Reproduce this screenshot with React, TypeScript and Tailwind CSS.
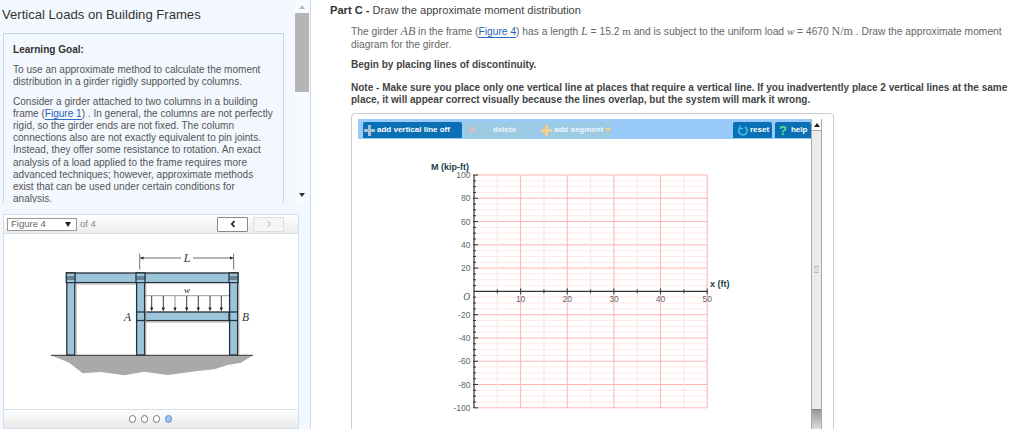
import React from "react";

const serif = { fontFamily: '"Liberation Serif", serif' };

function Chart() {
  const X0 = 474, PX = 4.664, Y0 = 291.4, PY = 1.164;
  const minor: React.ReactNode[] = [];
  for (let v = -100; v <= 100; v += 5) {
    const y = Y0 - v * PY;
    if (v === 0) continue;
    const major = v % 20 === 0;
    minor.push(<line key={"h" + v} x1={X0} x2={X0 + 50 * PX} y1={y} y2={y} stroke={major ? "#ffb3b3" : "#ffe8e8"} strokeWidth={1} />);
  }
  for (let v = 5; v <= 50; v += 5) {
    const x = X0 + v * PX;
    const major = v % 10 === 0;
    minor.push(<line key={"v" + v} x1={x} x2={x} y1={Y0 - 100 * PY} y2={Y0 + 100 * PY} stroke={major ? "#ffb3b3" : "#ffe0e0"} strokeWidth={1} />);
  }
  for (let v = -100; v <= 100; v += 5) {
    const y = Y0 - v * PY;
    if (v === 0) continue;
    const major = v % 20 === 0;
    minor.push(<line key={"t" + v} x1={473} x2={major ? 478 : 476} y1={y} y2={y} stroke="#333" strokeWidth={1} />);
  }
  for (let v = 5; v <= 50; v += 5) {
    const x = X0 + v * PX;
    const major = v % 10 === 0;
    minor.push(<line key={"vt" + v} x1={x} x2={x} y1={Y0 - (major ? 3 : 2)} y2={Y0 + (major ? 3 : 2)} stroke="#333" strokeWidth={1} />);
  }
  const ts = { fontFamily: '"Liberation Sans", sans-serif', fontSize: 8.5, fill: "#666" };
  return (
    <svg viewBox="358 139 453 290" width={453} height={290} className="block">
      {minor}
      <line x1={X0} x2={X0} y1={Y0 - 100 * PY} y2={Y0 + 100 * PY} stroke="#333" strokeWidth={1.2} />
      <line x1={X0} x2={X0 + 50 * PX} y1={Y0} y2={Y0} stroke="#333" strokeWidth={1.2} />
      {[100, 80, 60, 40, 20, -20, -40, -60, -80, -100].map((v) => (
        <text key={v} x={470.5} y={Y0 - v * PY + 3} textAnchor="end" style={ts}>{v}</text>
      ))}
      <text x={470} y={300} textAnchor="end" style={{ ...serif, fontSize: 9.5, fontStyle: "italic", fill: "#555" }}>O</text>
      {[10, 20, 30, 40, 50].map((v) => (
        <text key={v} x={X0 + v * PX} y={302} textAnchor="middle" style={ts}>{v}</text>
      ))}
      <text x={431} y={170} style={{ fontFamily: '"Liberation Sans", sans-serif', fontSize: 9, fontWeight: 700, fill: "#1d3d4a" }}>M (kip-ft)</text>
      <text x={710} y={287} style={{ fontFamily: '"Liberation Sans", sans-serif', fontSize: 9, fontWeight: 700, fill: "#1d3d4a" }}>x (ft)</text>
    </svg>
  );
}

function Frame() {
  const dark = "#263238";
  const col = (x: number) => (
    <g key={x}>
      <rect x={x} y={272} width={8} height={82} fill="#9cc5dc" stroke={dark} strokeWidth={1.3} />
      <line x1={x + 9.2} x2={x + 9.2} y1={282} y2={354} stroke="#999" strokeWidth={0.9} />
    </g>
  );
  return (
    <svg viewBox="3 233 296 175" width={296} height={175} className="block">
      <polygon points="50,354.3 252,354.3 240,361.7 226.7,364 213,368.3 196.7,370 166.7,374 143.3,370.7 123.3,374.3 100,371 81.7,372.3 68.3,361.7" fill="#a9a9a9" />
      <line x1={50} x2={252} y1={354.3} y2={354.3} stroke="#333" strokeWidth={1} />
      <rect x={65.5} y={272} width={171.5} height={9.6} fill="#9cc5dc" stroke={dark} strokeWidth={1.3} />
      <rect x={144} y={311} width={84} height={8.6} fill="#9cc5dc" stroke={dark} strokeWidth={1.3} />
      <line x1={74} x2={135} y1={283} y2={283} stroke="#999" strokeWidth={0.8} />
      <line x1={144} x2={228} y1={321} y2={321} stroke="#999" strokeWidth={0.8} />
      {[65.8, 135.6, 228.6].map(col)}
      {[[65.3, 74], [135, 144], [228, 237]].map(([a, b]) => (
        <g key={a}>
          <rect x={a} y={272} width={b - a} height={9.6} fill="#9cc5dc" stroke={dark} strokeWidth={1.2} />
          <line x1={a} x2={b} y1={276} y2={276} stroke={dark} strokeWidth={0.9} />
          <line x1={a} x2={b} y1={278} y2={278} stroke={dark} strokeWidth={0.9} />
        </g>
      ))}
      {[[135, 144], [228, 237]].map(([a, b]) => (
        <g key={a}>
          <line x1={a} x2={b} y1={311} y2={311} stroke={dark} strokeWidth={1.3} />
          <line x1={a} x2={b} y1={319.5} y2={319.5} stroke={dark} strokeWidth={1.3} />
        </g>
      ))}
      <line x1={144} x2={228} y1={294.7} y2={294.7} stroke="#999" strokeWidth={1} />
      {[150.7, 162.3, 174, 185.7, 197.3, 209, 220.3].map((x, i) => (
        <g key={x}>
          <line x1={x} x2={x} y1={295} y2={308} stroke={i === 2 ? "#888" : "#222"} strokeWidth={0.9} />
          <polygon points={`${x - 1.6},306.6 ${x + 1.6},306.6 ${x},310.4`} fill="#222" />
        </g>
      ))}
      <line x1={138.7} x2={138.7} y1={252.7} y2={268.7} stroke="#666" strokeWidth={0.9} />
      <line x1={232.7} x2={232.7} y1={252.7} y2={268.7} stroke="#666" strokeWidth={0.9} />
      <line x1={139} x2={180} y1={257} y2={257} stroke="#444" strokeWidth={0.8} />
      <line x1={192} x2={232} y1={257} y2={257} stroke="#444" strokeWidth={0.8} />
      <polygon points="139,257 142.5,255.5 142.5,258.5" fill="#222" />
      <polygon points="232.5,257 229,255.5 229,258.5" fill="#222" />
      <g style={{ ...serif, fontStyle: "italic", fill: "#333" }}>
        <text x={186} y={261} textAnchor="middle" fontSize={12}>L</text>
        <text x={186} y={292} textAnchor="middle" fontSize={9}>w</text>
        <text x={126.5} y={320} textAnchor="middle" fontSize={11.5}>A</text>
        <text x={244.5} y={320} textAnchor="middle" fontSize={11.5}>B</text>
      </g>
    </svg>
  );
}

function Plus({ color }: { color: string }) {
  return (
    <svg width={11} height={11} viewBox="0 0 11 11" className="shrink-0">
      <path d="M4 0h3v4h4v3H7v4H4V7H0V4h4z" fill={color} />
    </svg>
  );
}

export default function App() {
  return (
    <div className="flex h-[429px] w-[1024px] overflow-hidden bg-white text-[#555] font-['Liberation_Sans',Arial,sans-serif]">
      {/* Left panel */}
      <div className="flex h-full w-[311px] shrink-0 flex-col border-r border-[#c9dbee] bg-[#f3f8ff]">
        <div className="flex h-[203px] shrink-0">
          <div className="w-[295px] shrink-0 overflow-hidden">
            <h1 className="pl-[2px] pt-[7px] text-[13.1px] leading-[15px] text-[#333]">Vertical Loads on Building Frames</h1>
            <div className="ml-[3px] mt-[11px] h-[200px] w-[281px] border border-[#c3d6ea] pl-[9px] pr-[9px] pt-[10px] text-[10.05px] leading-[12.2px] text-[#555]">
              <p className="font-bold text-[#333]">Learning Goal:</p>
              <p className="mt-[8px]">To use an approximate method to calculate the moment distribution in a girder rigidly supported by columns.</p>
              <p className="mt-[7px]">
                Consider a girder attached to two columns in a building frame (<span className="border-b border-[#2a6cc0] text-[#1f5fb5]">Figure 1</span>) . In general, the columns are not perfectly rigid, so the girder ends are not fixed. The column connections also are not exactly equivalent to pin joints. Instead, they offer some resistance to rotation. An exact analysis of a load applied to the frame requires more advanced techniques; however, approximate methods exist that can be used under certain conditions for analysis.
              </p>
            </div>
          </div>
          <div className="flex w-[14px] shrink-0 flex-col items-center bg-[#f7fafe]">
            <div className="flex h-[13px] w-full items-center justify-center">
              <div className="h-0 w-0 border-x-[3.5px] border-b-[4px] border-x-transparent border-b-[#bbb]" />
            </div>
            <div className="h-[79px] w-full bg-[#b5b5b5]" />
            <div className="flex-1" />
            <div className="flex h-[17px] w-full items-center justify-center">
              <div className="h-0 w-0 border-x-[3.5px] border-t-[4px] border-x-transparent border-t-[#333]" />
            </div>
          </div>
        </div>
        <div className="ml-[3px] mt-[11px] flex w-[296px] flex-1 flex-col border border-[#d3e0ec] bg-white">
          <div className="flex h-[18px] shrink-0 items-center bg-gradient-to-b from-white to-[#ececec] pl-[3px] text-[9.5px] text-[#666]">
            <div className="flex h-[13px] w-[70px] items-center justify-between border border-[#999] bg-white pl-[3px] pr-[5px]">
              <span>Figure 4</span>
              <div className="h-0 w-0 border-x-[3px] border-t-[5px] border-x-transparent border-t-[#222]" />
            </div>
            <span className="ml-[3px] text-[#888]">of 4</span>
            <div className="ml-auto mr-[14px] flex gap-[5px]">
              <div className="flex h-[15px] w-[31px] items-center justify-center rounded-[1px] border border-[#888] bg-white">
                <svg width={6} height={8} viewBox="0 0 6 8"><path d="M4.5 1 L1.8 4 L4.5 7" fill="none" stroke="#222" strokeWidth={1.8} /></svg>
              </div>
              <div className="flex h-[15px] w-[31px] items-center justify-center rounded-[1px] border border-[#ddd] bg-[#f5f5f5]">
                <svg width={6} height={8} viewBox="0 0 6 8"><path d="M1.5 1 L4.2 4 L1.5 7" fill="none" stroke="#ccc" strokeWidth={1.4} /></svg>
              </div>
            </div>
          </div>
          <div className="shrink-0 border-y border-[#d3e0ec]">
            <Frame />
          </div>
          <div className="flex flex-1 items-center justify-center gap-[4.5px] bg-gradient-to-b from-white to-[#e9e9e9] pr-[1px]">
            {[0, 1, 2].map((i) => (
              <div key={i} className="h-[7.5px] w-[7.5px] rounded-full border border-[#777] bg-white" />
            ))}
            <div className="h-[7.5px] w-[7.5px] rounded-full border border-[#6a8fc0] bg-[#9cc4f0]" />
          </div>
        </div>
      </div>

      {/* Right panel */}
      <div className="min-w-0 flex-1 pl-[19px]">
        <p className="pt-[4px] text-[11.1px] leading-[13px] text-[#444]"><b className="text-[#333]">Part C - </b>Draw the approximate moment distribution</p>
        <div className="ml-[21px] w-[664px] pt-[8px]">
          <p className="text-[10.25px] leading-[13px] text-[#666]">
            The girder <i style={serif} className="text-[12px]">AB</i> in the frame (<span className="border-b border-[#2a6cc0] text-[#1f5fb5]">Figure 4</span>) has a length <i style={serif} className="text-[12px]">L</i> = 15.2 <span style={serif} className="text-[11px]">m</span> and is subject to the uniform load <i style={serif} className="text-[11px]">w</i> = 4670 <span style={serif} className="text-[12px]">N/m</span> . Draw the approximate moment diagram for the girder.
          </p>
          <p className="pt-[8px] text-[10.04px] font-bold leading-[12px] text-[#444]">Begin by placing lines of discontinuity.</p>
          <p className="pt-[11px] text-[10.02px] font-bold leading-[12px] text-[#444]">Note - Make sure you place only one vertical line at places that require a vertical line. If you inadvertently place 2 vertical lines at the same place, it will appear correct visually because the lines overlap, but the system will mark it wrong.</p>
          <div className="mt-[7px] h-[400px] w-[483px] rounded-t-[4px] border border-[#ccc] pl-[6px] pt-[5px]">
            <div className="flex w-[464px]">
              <div className="w-[453px]">
                <div className="flex h-[20px] items-start bg-[#99caf9] pl-[5px] pt-[3px] text-[8px] font-bold leading-none text-white">
                  <div className="flex h-[16px] w-[99px] items-center gap-[2px] rounded-t-[2px] bg-[#0a6fb3] pl-[1px]">
                    <Plus color="#a9c0cf" />
                    <span>add vertical line off</span>
                  </div>
                  <div className="ml-[2px] flex h-[16px] w-[72px] items-center rounded-t-[2px] bg-[#9ccae3] pl-[3px] text-[#eef6fb]">
                    <span className="text-[12px] font-normal leading-none text-[#f3b9a9]">✕</span>
                    <span className="ml-[16px]">delete</span>
                  </div>
                  <div className="ml-[2px] flex h-[16px] w-[74px] items-center gap-[2px] rounded-t-[2px] bg-[#9ccae3] pl-[3px] text-[#eef6fb]">
                    <Plus color="#f6d08f" />
                    <span>add segment</span>
                    <div className="h-0 w-0 border-x-[3px] border-t-[4px] border-x-transparent border-t-[#f6d08f]" />
                  </div>
                  <div className="ml-auto flex h-[16px] w-[39px] items-center gap-[2px] rounded-t-[2px] bg-[#0a6fb3] pl-[4px]">
                    <svg width={11} height={11} viewBox="0 0 11 11" className="shrink-0" fill="none" stroke="#39c3ee" strokeWidth={1.6}>
                      <path d="M3.2 2.4 A4.2 4.2 0 1 0 8 2" />
                      <path d="M2.8 0.4 V3.6 H6" strokeWidth={1.2} />
                    </svg>
                    <span>reset</span>
                  </div>
                  <div className="ml-[3px] flex h-[16px] w-[36px] items-center gap-[4px] rounded-t-[2px] bg-[#0a6fb3] pl-[4px]">
                    <span className="text-[13px] font-bold leading-none text-[#5fe08c]">?</span>
                    <span>help</span>
                  </div>
                </div>
                <Chart />
              </div>
              <div className="flex h-[310px] w-[11px] flex-col border-x border-[#aaa] bg-[#f4f4f4]">
                <div className="flex h-[12px] items-center justify-center border-b border-[#aaa] bg-white">
                  <div className="h-0 w-0 border-x-[3px] border-b-[4px] border-x-transparent border-b-[#222]" />
                </div>
                <div className="flex h-[279px] flex-col items-center border-b border-[#888] bg-[#ececec] pt-[135px]">
                  <div className="h-[7px] w-[5px] border-y border-[#bbb] bg-[#ddd]" />
                </div>
                <div className="flex-1 bg-gradient-to-b from-[#999] to-[#ddd]" />
              </div>
            </div>
          </div>
        </div>
      </div>
    </div>
  );
}
